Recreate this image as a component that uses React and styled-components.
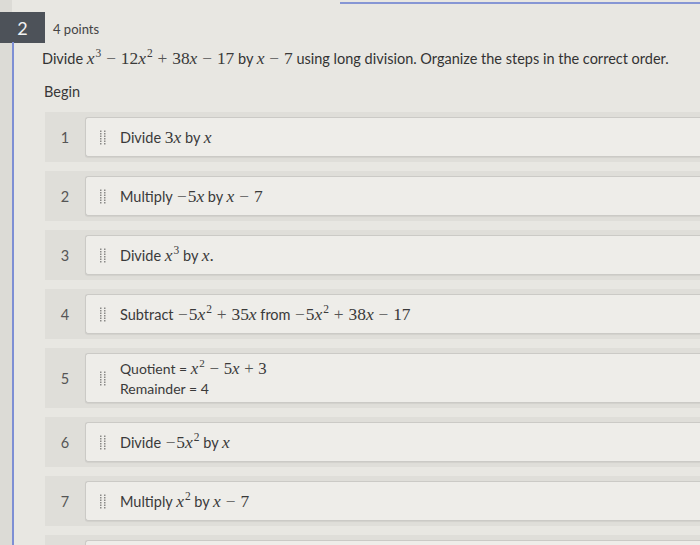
import React from 'react'
import styled, { createGlobalStyle } from 'styled-components'

const M = styled.span`
  font-family: "Liberation Serif", "DejaVu Serif", serif;
  font-size: 1.2em;
  color: #3a3a3a;
  sup {
    margin-left: 1px;
  }
`

const V = styled.i`
  font-family: "Liberation Serif", "DejaVu Serif", serif;
  font-style: italic;
`

const N = styled.span`
  font-style: normal;
`

const Op = styled.span`
  margin: 0 ${(p) => (p.$sp ? '0.28em' : '0.05em')};
  color: #555;
`

const Lines = styled.div`
  display: flex;
  flex-direction: column;
  gap: 1px;
  font-size: 14px;
`

const getSteps = () => [
  { id: 1, content: <>Divide <M><N>3</N><V>x</V></M> by <M><V>x</V></M></> },
  { id: 2, content: <>Multiply <M><Op>−</Op><N>5</N><V>x</V></M> by <M><V>x</V><Op $sp>−</Op><N>7</N></M></> },
  { id: 3, content: <>Divide <M><V>x</V><sup>3</sup></M> by <M><V>x</V>.</M></> },
  {
    id: 4,
    content: (
      <>
        Subtract <M><Op>−</Op><N>5</N><V>x</V><sup>2</sup><Op $sp>+</Op><N>35</N><V>x</V></M> from{' '}
        <M><Op>−</Op><N>5</N><V>x</V><sup>2</sup><Op $sp>+</Op><N>38</N><V>x</V><Op $sp>−</Op><N>17</N></M>
      </>
    ),
  },
  {
    id: 5,
    tall: true,
    content: (
      <Lines>
        <span>Quotient = <M><V>x</V><sup>2</sup><Op $sp>−</Op><N>5</N><V>x</V><Op $sp>+</Op><N>3</N></M></span>
        <span>Remainder = 4</span>
      </Lines>
    ),
  },
  { id: 6, content: <>Divide <M><Op>−</Op><N>5</N><V>x</V><sup>2</sup></M> by <M><V>x</V></M></> },
  { id: 7, content: <>Multiply <M><V>x</V><sup>2</sup></M> by <M><V>x</V><Op $sp>−</Op><N>7</N></M></> },
  { id: 8, content: null },
]

function Handle() {
  return (
    <svg width="8" height="15" viewBox="0 0 8 15">
      {[0, 1, 2, 3, 4, 5].map((r) =>
        [0, 1].map((c) => (
          <rect key={`${r}-${c}`} x={1 + c * 4} y={0.5 + r * 2.5} width="1.5" height="1.5" fill="#8a8a88" />
        ))
      )}
    </svg>
  )
}

function App() {
  const steps = getSteps()
  return (
    <>
      <Global />
      <Page>
        <TopLine />
        <Header>
          <Badge>2</Badge>
          <Points>4 points</Points>
        </Header>
        <Body>
          <Question>
            Divide <M><V>x</V><sup>3</sup><Op $sp>−</Op><N>12</N><V>x</V><sup>2</sup><Op $sp>+</Op><N>38</N><V>x</V><Op $sp>−</Op><N>17</N></M> by{' '}
            <M><V>x</V><Op $sp>−</Op><N>7</N></M> using long division. Organize the steps in the correct order.
          </Question>
          <Begin>Begin</Begin>
          <List>
            {steps.map((s) => (
              <Row key={s.id} $tall={s.tall}>
                <Num>{s.content ? s.id : ''}</Num>
                <Card>
                  {s.content && (
                    <>
                      <HandleBox><Handle /></HandleBox>
                      <Text>{s.content}</Text>
                    </>
                  )}
                </Card>
              </Row>
            ))}
          </List>
        </Body>
      </Page>
    </>
  )
}

export default App

const Global = createGlobalStyle`
  html, body {
    margin: 0;
    padding: 0;
    background: #e8e7e2;
    overflow: hidden;
  }
  body {
    font-family: Lato, "Open Sans", sans-serif;
    color: #3a3a3a;
  }
`

const Page = styled.div`
  width: 700px;
  height: 545px;
  overflow: hidden;
  position: relative;
  background: linear-gradient(90deg, #dcdbd6 0px, #dcdbd6 12px, #e8e7e2 12px);
  &::before {
    content: '';
    position: absolute;
    left: 12px;
    top: 42px;
    bottom: 0;
    width: 2px;
    background: #7d8fd4;
  }
`

const TopLine = styled.div`
  height: 2px;
  margin: 2px 0 0 340px;
  background: #8696d4;
`

const Header = styled.div`
  display: flex;
  align-items: center;
  margin-top: 8px;
  height: 31px;
`

const Badge = styled.div`
  width: 45px;
  height: 31px;
  background: #4d5259;
  color: #f2f2f2;
  font-size: 18px;
  display: flex;
  align-items: center;
  justify-content: center;
`

const Points = styled.div`
  margin-left: 8px;
  font-size: 13px;
  color: #444;
  padding-top: 3px;
`

const Body = styled.div`
  padding-left: 42px;
`

const Question = styled.div`
  font-size: 14.5px;
  margin-top: 5px;
  color: #333;
  white-space: nowrap;
  sup {
    font-size: 0.66em;
    vertical-align: 0.6em;
    line-height: 0;
  }
`

const Begin = styled.div`
  font-size: 14.5px;
  margin-top: 14px;
  margin-left: 2px;
  color: #383838;
`

const List = styled.div`
  margin-top: 12px;
  display: flex;
  flex-direction: column;
  gap: 9px;
  margin-left: 3px;
`

const Row = styled.div`
  display: flex;
  align-items: stretch;
  background: #dfded9;
  padding: 5px 0;
  height: ${(p) => (p.$tall ? 60 : 50)}px;
  box-sizing: border-box;
  flex-shrink: 0;
`

const Num = styled.div`
  width: 40px;
  display: flex;
  align-items: center;
  justify-content: center;
  font-size: 14.5px;
  color: #555;
`

const Card = styled.div`
  flex: 1;
  display: flex;
  align-items: center;
  background: #eeede9;
  border: 1px solid #cbcac6;
  border-right: none;
  border-radius: 3px 0 0 3px;
  box-shadow: 0 1px 1px rgba(0, 0, 0, 0.06);
`

const HandleBox = styled.div`
  width: 34px;
  display: flex;
  justify-content: center;
  align-items: center;
`

const Text = styled.div`
  font-size: 14.5px;
  color: #3a3a3a;
  white-space: nowrap;
  sup {
    font-size: 0.66em;
    vertical-align: 0.6em;
    line-height: 0;
  }
`
